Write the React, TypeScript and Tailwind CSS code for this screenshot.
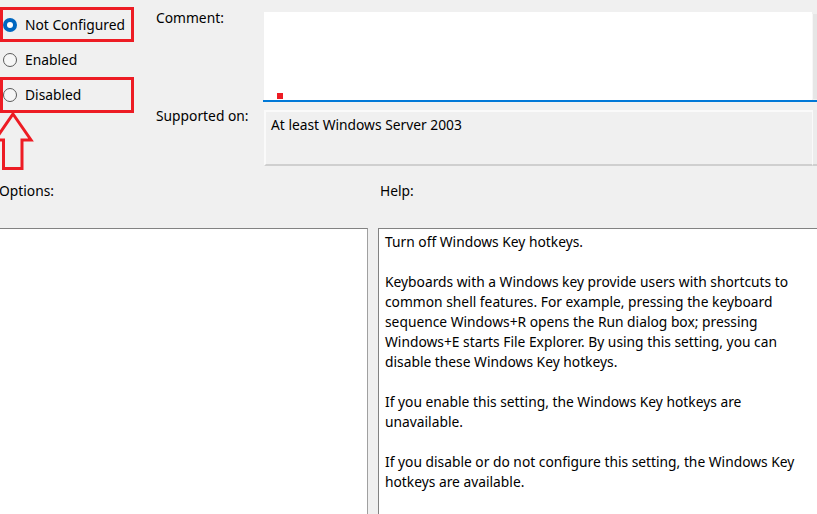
import React from 'react'

const font = { fontFamily: '"Noto Sans", "Open Sans", Arial, sans-serif' }

function Radio({ label, checked }: { label: string; checked?: boolean }) {
  return (
    <div className="flex items-center h-[35px]">
      {checked ? (
        <span className="ml-[3px] w-[14px] h-[14px] rounded-full bg-[#0067c0] flex items-center justify-center">
          <span className="w-[6px] h-[6px] rounded-full bg-white" />
        </span>
      ) : (
        <span className="ml-[3px] w-[14px] h-[14px] rounded-full border border-[#5a5a5a] bg-[#f6f6f6]" />
      )}
      <span className="ml-[8px]">{label}</span>
    </div>
  )
}

const helpLines = [
  'Turn off Windows Key hotkeys.',
  '',
  'Keyboards with a Windows key provide users with shortcuts to',
  'common shell features. For example, pressing the keyboard',
  'sequence Windows+R opens the Run dialog box; pressing',
  'Windows+E starts File Explorer. By using this setting, you can',
  'disable these Windows Key hotkeys.',
  '',
  'If you enable this setting, the Windows Key hotkeys are',
  'unavailable.',
  '',
  'If you disable or do not configure this setting, the Windows Key',
  'hotkeys are available.',
]

export default function App() {
  return (
    <div
      className="relative w-[817px] h-[514px] overflow-hidden bg-[#f0f0f0] text-black text-[13.8px] leading-[20px]"
      style={font}
    >
      {/* top section */}
      <div className="flex h-[172px]">
        <div className="w-[156px] pt-[7px]">
          <Radio label="Not Configured" checked />
          <Radio label="Enabled" />
          <Radio label="Disabled" />
        </div>
        <div className="w-[108px] flex flex-col">
          <div className="mt-[8px]">Comment:</div>
          <div className="mt-[78px]">Supported on:</div>
        </div>
        <div className="flex-1 flex flex-col pt-[12px]">
          <div className="flex h-[88px]">
            <div className="flex-1 bg-white relative">
              <span className="absolute left-[13px] bottom-[1px] w-[6px] h-[6px] bg-[#ed1c24]" />
            </div>
            <div className="w-[5px] mt-[2px] mb-[1px] bg-[#e6e6e6] border-l border-[#f7f7f7]" />
          </div>
          <div className="h-[2px] bg-[#0078d7] -ml-[1px]" />
          <div className="flex mt-[8px] h-[56px]">
            <div className="flex-1 bg-[#f0f0f0] border-t-2 border-l-2 border-[#fafafa] border-b-2 border-b-[#cfcfcf] pl-[5px] pt-[3px]">
              At least Windows Server 2003
            </div>
            <div className="w-[5px] border-l border-[#fafafa] border-b-2 border-b-[#cfcfcf] bg-[#ececec]" />
          </div>
        </div>
      </div>

      {/* labels */}
      <div className="flex h-[56px]">
        <div className="w-[381px] -ml-[1px] pt-[9px]">Options:</div>
        <div className="pt-[9px]">Help:</div>
      </div>

      {/* bottom boxes */}
      <div className="flex h-[300px]">
        <div className="w-[370px] -ml-[2px] bg-white border border-[#828282] border-r-[#a0a0a0]" />
        <div className="ml-[10px] flex-1 -mr-[20px] bg-white border border-[#828282] pl-[6px] pt-[3px]">
          {helpLines.map((l, i) => (
            <div key={i} className="whitespace-nowrap h-[20px]">
              {l}
            </div>
          ))}
        </div>
      </div>

      {/* annotations */}
      <svg className="absolute inset-0 pointer-events-none" width={817} height={514}>
        <rect x={1.5} y={8.5} width={131} height={32} fill="none" stroke="#ed1c24" strokeWidth={3} />
        <rect x={1.5} y={78.5} width={131} height={33} fill="none" stroke="#ed1c24" strokeWidth={3} />
        <polygon
          points="13,114 31,140 22,140 22,168.5 3.5,168.5 3.5,140 -5,140"
          fill="none"
          stroke="#ed1c24"
          strokeWidth={3}
          strokeLinejoin="miter"
        />
      </svg>
    </div>
  )
}
